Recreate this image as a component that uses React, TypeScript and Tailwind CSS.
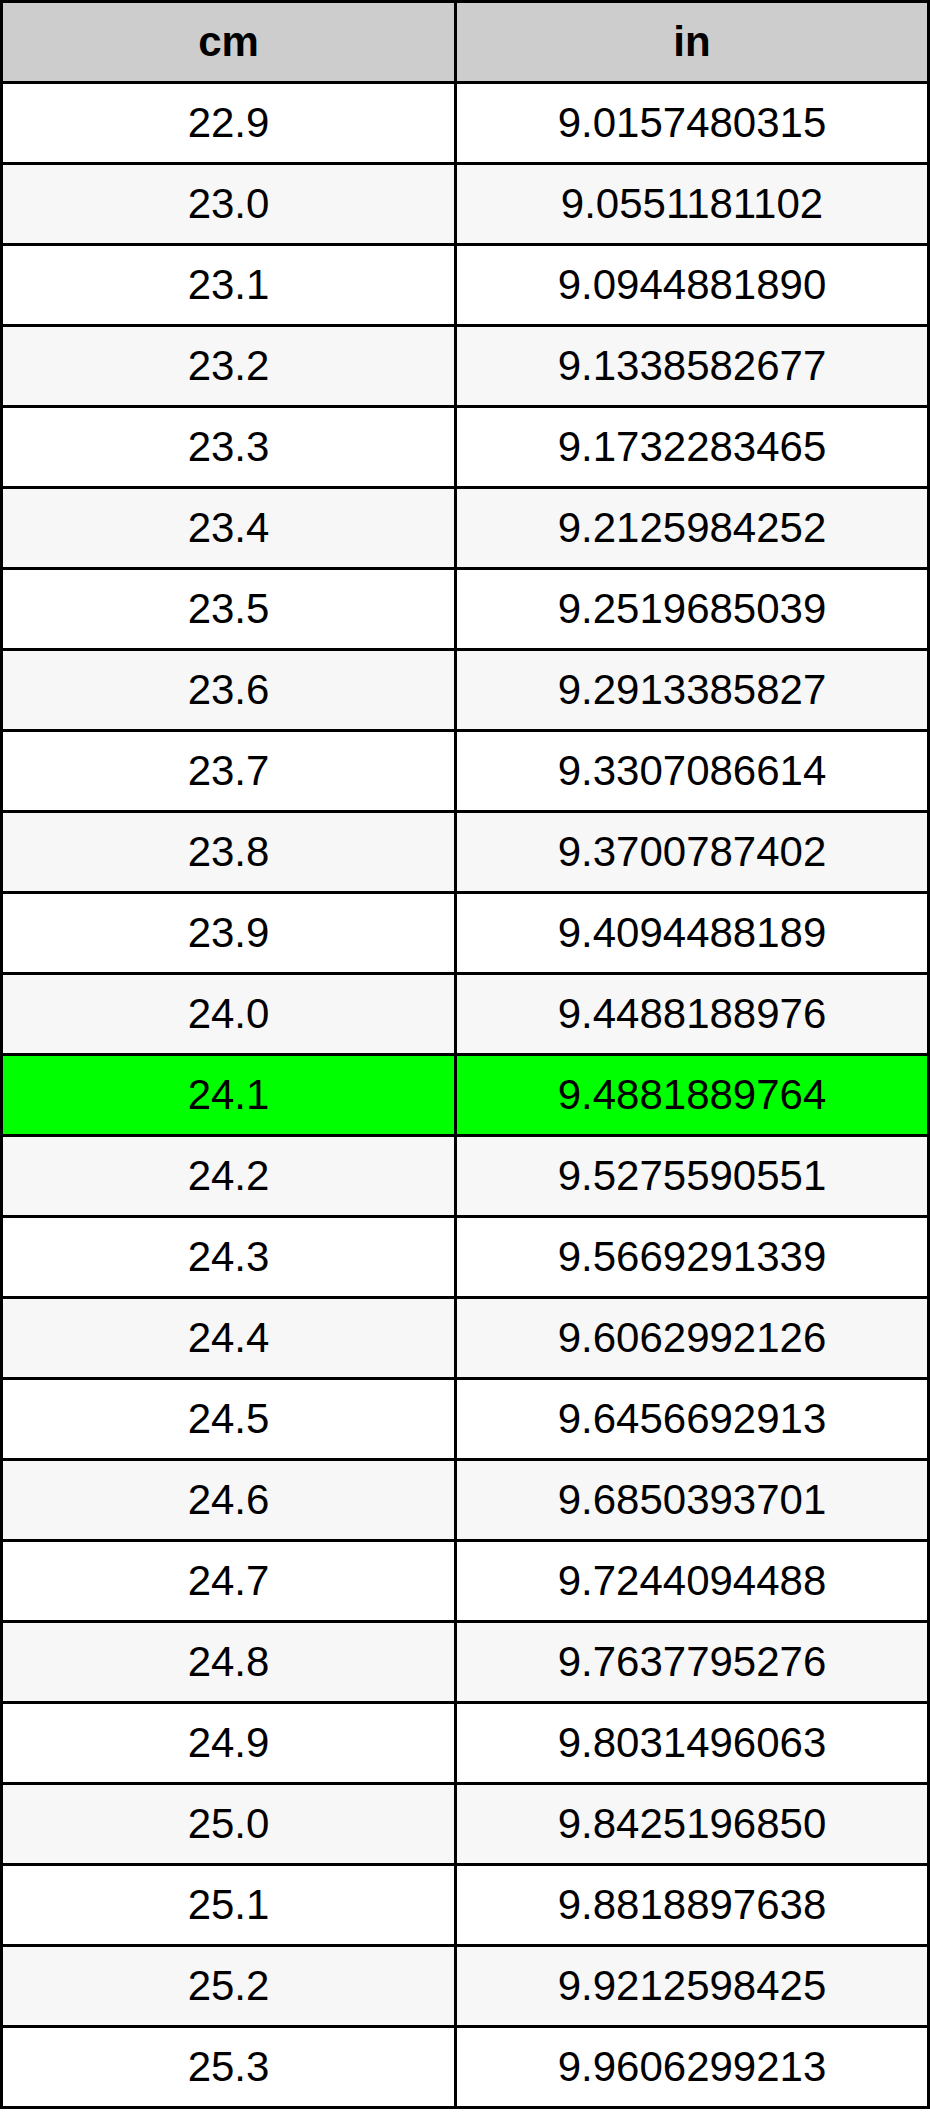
const rows: [string, string][] = [
  ["22.9", "9.0157480315"],
  ["23.0", "9.0551181102"],
  ["23.1", "9.0944881890"],
  ["23.2", "9.1338582677"],
  ["23.3", "9.1732283465"],
  ["23.4", "9.2125984252"],
  ["23.5", "9.2519685039"],
  ["23.6", "9.2913385827"],
  ["23.7", "9.3307086614"],
  ["23.8", "9.3700787402"],
  ["23.9", "9.4094488189"],
  ["24.0", "9.4488188976"],
  ["24.1", "9.4881889764"],
  ["24.2", "9.5275590551"],
  ["24.3", "9.5669291339"],
  ["24.4", "9.6062992126"],
  ["24.5", "9.6456692913"],
  ["24.6", "9.6850393701"],
  ["24.7", "9.7244094488"],
  ["24.8", "9.7637795276"],
  ["24.9", "9.8031496063"],
  ["25.0", "9.8425196850"],
  ["25.1", "9.8818897638"],
  ["25.2", "9.9212598425"],
  ["25.3", "9.9606299213"],
];

const highlight = "24.1";

export default function App() {
  return (
    <div className="bg-white w-[930px] font-['Liberation_Sans',Arial,sans-serif] text-black">
      <table className="w-full border-collapse border-[3px] border-black text-[42px] leading-none">
        <thead>
          <tr className="bg-[#cdcdcd]">
            <th className="w-[454px] h-[81px] p-0 border-[3px] border-black font-bold text-center">cm</th>
            <th className="h-[81px] p-0 border-[3px] border-black font-bold text-center">in</th>
          </tr>
        </thead>
        <tbody>
          {rows.map(([cm, inch], idx) => {
            let bg = idx % 2 === 1 ? "bg-[#f7f7f7]" : "bg-white";
            if (cm === highlight) bg = "bg-[#00ff00]";
            return (
              <tr key={idx} className={bg}>
                <td className="h-[81px] p-0 border-[3px] border-black text-center">{cm}</td>
                <td className="h-[81px] p-0 border-[3px] border-black text-center">{inch}</td>
              </tr>
            );
          })}
        </tbody>
      </table>
    </div>
  );
}
